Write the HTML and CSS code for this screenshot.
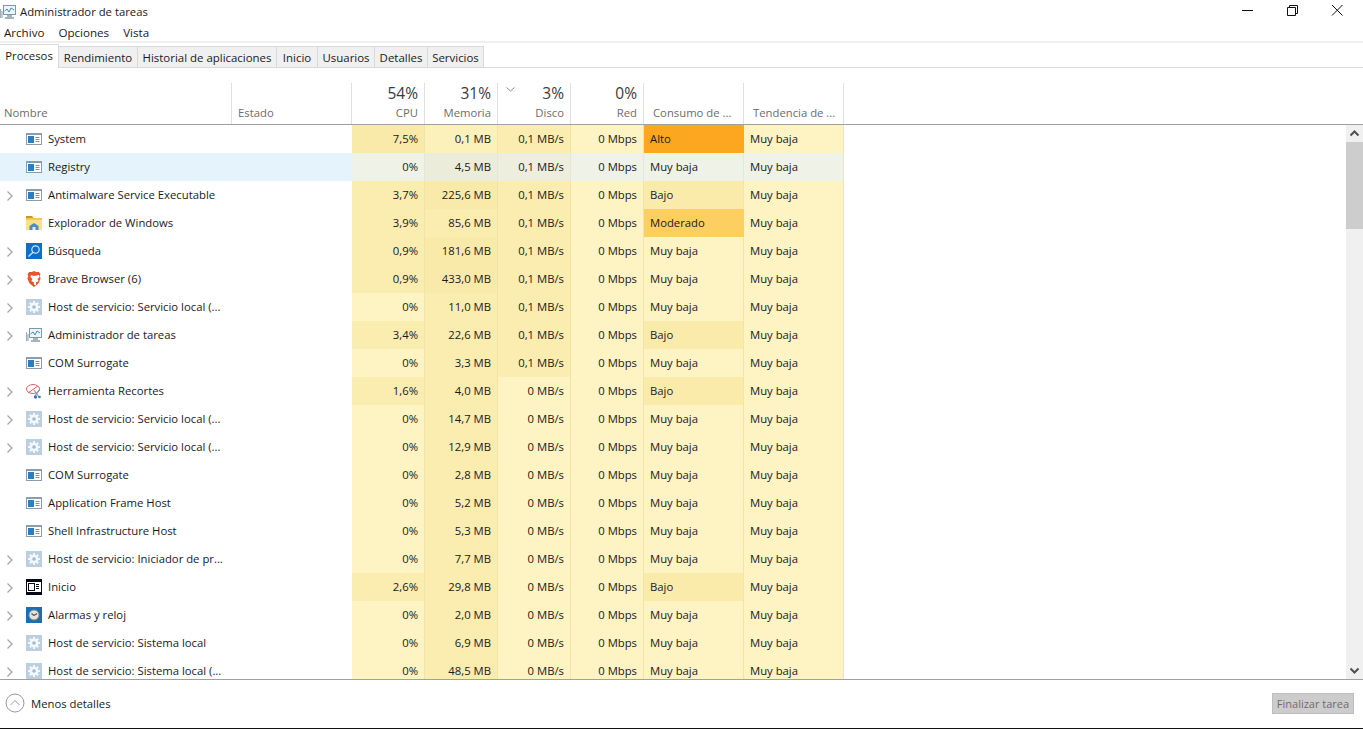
FILE: index.html
```html
<!DOCTYPE html>
<html lang="es">
<head>
<meta charset="utf-8">
<title>Administrador de tareas</title>
<link rel="stylesheet" href="styles.css">
</head>
<body>
<svg class="defs" width="0" height="0">
  <defs>
    <symbol id="i-app" viewBox="0 0 16 16"><rect x="0" y="2" width="16" height="12" fill="#8c9cab"/><rect x="1" y="4" width="14" height="9" fill="#fff"/><rect x="2" y="5" width="6" height="7" fill="#2a7fc4"/><path d="M9.500 6.500h4M9.500 8.500h4M9.500 10.500h4" stroke="#7f8f9e"/></symbol>
    <symbol id="i-folder" viewBox="0 0 16 16"><path d="M0 1h6l2 2h8v12H0z" fill="#f5c94e"/><path d="M0 1h6l1 2H0z" fill="#c9962b"/><path d="M0 5h16v10H0z" fill="#fbdf8a"/><path d="M3.500 15v-4l4.500-3 4.500 3v4z" fill="#4a8ec4"/><path d="M6.500 15v-3h3v3z" fill="#e8eef4"/></symbol>
    <symbol id="i-search" viewBox="0 0 16 16"><rect width="16" height="16" fill="#0f6fc6"/><circle cx="9.500" cy="6.500" r="3.700" fill="none" stroke="#cfe6fa" stroke-width="1.200"/><path d="M7 9.200L2.500 13.500" stroke="#cfe6fa" stroke-width="1.300"/></symbol>
    <symbol id="i-brave" viewBox="0 0 16 16"><path d="M8 0l2.200 1h2.600l1.600 2-.6 2.200.8 2.300-2.200 5L8 16l-4.400-3.500-2.200-5 .8-2.300L1.600 3l1.600-2h2.600z" fill="#e8552b"/><path d="M8 5L5 4l-.6 2 2 2-1 2 2.600 1.500V14h2v-2.500L12.600 10l-1-2 2-2L13 4z" fill="#fff"/></symbol>
    <symbol id="i-gear" viewBox="0 0 16 16"><rect width="16" height="16" fill="#bccfe0"/><circle cx="8" cy="8" r="4.300" fill="#f5f8fb"/><path d="M8 2v12M2 8h12M3.800 3.800l8.400 8.400M12.200 3.800l-8.400 8.400" stroke="#f5f8fb" stroke-width="2"/><circle cx="8" cy="8" r="1.800" fill="#9dbbd5"/></symbol>
    <symbol id="i-taskmgr" viewBox="0 0 16 16"><rect x="3.500" y="1.500" width="12" height="9" fill="#eef4f8" stroke="#7f98a8"/><path d="M4.500 7l2.500-2 2 3 2-4 3 2" fill="none" stroke="#3f8fb5"/><path d="M0.500 5v9M2 7v7" stroke="#9fb0bc" stroke-width="1.200"/><path d="M7 11h5v2h2v2H5v-2h2z" fill="#a7b4bd"/></symbol>
    <symbol id="i-snip" viewBox="0 0 16 16"><ellipse cx="7" cy="6" rx="6.500" ry="4.500" fill="none" stroke="#d9656a"/><path d="M2 10L12 3" stroke="#d9656a"/><path d="M8 7l5 7M14 6L9 13" stroke="#8a9aa8" stroke-width="1.200"/><circle cx="9.500" cy="14" r="1.700" fill="#2f7fc0"/><circle cx="13.500" cy="14" r="1.300" fill="#2f7fc0"/></symbol>
    <symbol id="i-news" viewBox="0 0 16 16"><rect width="16" height="16" fill="#050a14"/><rect x="1" y="3" width="14" height="10" fill="#fff"/><rect x="2" y="4" width="7" height="8" fill="#050a14"/><rect x="3" y="5" width="5" height="6" fill="#fff"/><path d="M10 5.500h3M10 7.500h3M10 9.500h3" stroke="#050a14"/></symbol>
    <symbol id="i-clock" viewBox="0 0 16 16"><rect width="16" height="16" fill="#1b6fb0"/><circle cx="8" cy="8" r="5" fill="#e8e4dc" stroke="#8c8c8c"/><path d="M8 8.500L5.500 6.500M8 8.500l3-2" stroke="#555" stroke-width="1.300"/></symbol>
    <symbol id="i-chev" viewBox="0 0 8 12"><path d="M1.500 1.500L6 6l-4.500 4.500" fill="none" stroke="#a6a6a6" stroke-width="1.300"/></symbol>
  </defs>
</svg>
<div class="window">
  <header class="titlebar">
    <div class="title"><svg class="title-icon"><use href="#i-taskmgr"/></svg><span>Administrador de tareas</span></div>
    <div class="winbtns">
      <svg class="winbtn" viewBox="0 0 45 20"><path d="M17 10.500h11" stroke="#111" fill="none"/></svg>
      <svg class="winbtn" viewBox="0 0 45 20"><path d="M17.500 7.500h8v8h-8zM19.500 7.500v-2h8v8h-2" stroke="#111" fill="none"/></svg>
      <svg class="winbtn" viewBox="0 0 45 20"><path d="M17 5l10.500 10.500M27.500 5L17 15.500" stroke="#111" fill="none"/></svg>
    </div>
  </header>
  <nav class="menu"><span>Archivo</span><span>Opciones</span><span>Vista</span></nav>
  <div class="tabs">
    <span class="tab active">Procesos</span><span class="tab t1">Rendimiento</span><span class="tab t2">Historial de aplicaciones</span><span class="tab t3">Inicio</span><span class="tab t4">Usuarios</span><span class="tab t5">Detalles</span><span class="tab t6">Servicios</span>
  </div>
  <div class="thead">
    <div class="th left first"><span class="lbl">Nombre</span></div>
    <div class="th left"><span class="lbl">Estado</span></div>
    <div class="th num"><span class="pct">54%</span><span class="lbl">CPU</span></div>
    <div class="th num"><span class="pct">31%</span><span class="lbl">Memoria</span></div>
    <div class="th num sorted"><span class="pct">3%</span><span class="lbl">Disco</span><svg class="sort" viewBox="0 0 9 5"><path d="M.5.500l4 3.500 4-3.500" fill="none" stroke="#8a8a8a"/></svg></div>
    <div class="th num"><span class="pct">0%</span><span class="lbl">Red</span></div>
    <div class="th left wide"><span class="lbl">Consumo de ...</span></div>
    <div class="th left wide"><span class="lbl">Tendencia de ...</span></div>
  </div>
  <div class="body">
    <div class="rows" id="rows"></div>
    <div class="scrollbar">
      <svg class="sb-arrow" viewBox="0 0 17 17"><path d="M4.500 10.500l4-4 4 4" fill="none" stroke="#505050" stroke-width="2"/></svg>
      <div class="sb-thumb"></div>
      <div class="sb-track"></div>
      <svg class="sb-arrow" viewBox="0 0 17 17"><path d="M4.500 6.500l4 4 4-4" fill="none" stroke="#505050" stroke-width="2"/></svg>
    </div>
  </div>
  <footer class="footer">
    <div class="less"><svg class="less-icon" viewBox="0 0 20 20"><circle cx="10" cy="10" r="9" fill="none" stroke="#9a9a9a"/><path d="M5.500 12l4.500-4.500 4.500 4.500" fill="none" stroke="#9a9a9a"/></svg><span>Menos detalles</span></div>
    <button class="endtask" type="button">Finalizar tarea</button>
  </footer>
</div>
<script src="app.js"></script>
</body>
</html>
```
FILE: styles.css
```css
* { box-sizing: border-box; }
html, body { margin: 0; height: 100%; background: #fff; overflow: hidden; }
body { font-family: "Open Sans", "Noto Sans", sans-serif; font-size: 11.300px; color: #1a1a1a; }
.defs { position: absolute; }
.window { display: flex; flex-direction: column; height: 729px; border-bottom: 1px solid #111; }
.titlebar { display: flex; justify-content: space-between; height: 22px; flex: none; }
.title { display: flex; align-items: center; gap: 4px; height: 23px; }
.title-icon { width: 16px; height: 16px; }
.winbtns { display: flex; padding-right: 3px; }
.winbtn { width: 45px; height: 20px; }
.menu { display: flex; gap: 14px; height: 21px; padding: 1px 0 0 4px; align-items: center; flex: none; border-bottom: 2px solid #f0f0f0; font-size: 11.600px; }
.tabs { display: flex; height: 25px; flex: none; border-bottom: 1px solid #d9d9d9; align-items: flex-end; font-size: 11.450px; }
.tab { height: 21px; line-height: 21px; text-align: center; background: #f0f0f0; border: 1px solid #d9d9d9; border-left: 0; border-bottom: 0; white-space: nowrap; }
.tab.active { height: 24px; margin-bottom: -1px; background: #fff; line-height: 21px; width: 59px; font-size: 11.300px; }
.t1 { width: 79px; }
.t2 { width: 139px; }
.t3 { width: 41px; }
.t4 { width: 57px; }
.t5 { width: 53px; }
.t6 { width: 56px; }
.thead { display: grid; grid-template-columns: 232px 120px repeat(4, 73px) 100px 100px; height: 57px; flex: none; border-bottom: 1px solid #a0a0a0; padding-top: 15px; }
.th { position: relative; display: flex; flex-direction: column; justify-content: flex-end; border-right: 1px solid #e0e0e0; padding: 0 6px 3px; color: #6d6d6d; }
.th.first { padding-left: 4px; }
.th.num { align-items: flex-end; }
.th.wide { padding-left: 9px; }
.pct { font-size: 15.500px; line-height: 20px; color: #3a3a3a; margin-bottom: 1px; }
.lbl { line-height: 17px; white-space: nowrap; }
.sort { position: absolute; left: 8px; top: 4px; width: 9px; height: 5px; }
.body { display: flex; flex: 1; min-height: 0; }
.rows { flex: 1; overflow: hidden; }
.row { display: grid; grid-template-columns: 232px 120px repeat(4, 73px) 100px 100px; height: 28px; align-items: stretch; }
.name { display: flex; align-items: center; position: relative; padding-left: 26px; gap: 6px; white-space: nowrap; }
.name span { margin-bottom: 1px; }
.chev { position: absolute; left: 6px; top: 9px; width: 8px; height: 12px; }
.icon { width: 16px; height: 16px; flex: none; }
.cell { display: flex; align-items: center; justify-content: flex-end; padding: 0 6px 1px; border-right: 1px solid #f3e4a4; background: #fdf3c3; white-space: nowrap; }
.cell.txt { justify-content: flex-start; padding-left: 6px; }
.row.hover .name, .row.hover .state { background: #e5f3fd; }
.h0 { background: #fdf3c3; }
.h1 { background: #fcf0bb; }
.h2 { background: #fbecb0; }
.h3 { background: #faeaa9; }
.hover .cell { background: #eff2e6; border-right-color: #e6e8d5; }
.hover .cell.mem { background: #ebecd9; }
.hover .cell.disk { background: #edeedd; }
.lvl-alto { background: #fca71f; border-right-color: #fca71f; }
.lvl-mod { background: #fdcf60; border-right-color: #fdcf60; }
.lvl-bajo { background: #faebab; }
.scrollbar { width: 17px; flex: none; display: flex; flex-direction: column; background: #f0f0f0; }
.sb-arrow { width: 17px; height: 17px; flex: none; }
.sb-thumb { height: 87px; background: #cdcdcd; flex: none; }
.sb-track { flex: 1; }
.footer { display: flex; justify-content: space-between; align-items: center; height: 49px; flex: none; border-top: 1px solid #a0a0a0; padding: 0 9px 2px 5px; }
.less { display: flex; align-items: center; gap: 6px; }
.less-icon { width: 20px; height: 20px; }
.endtask { width: 82px; height: 21px; padding: 0; font: inherit; font-size: 11px; background: #cccccc; color: #6d6d6d; border: 1px solid #bdbdbd; }
```
FILE: app.js
```js
const data = [
 ["app","System",0,"7,5%","0,1 MB","0,1 MB/s","Alto","alto","h3","h1","h2"],
 ["app","Registry",0,"0%","4,5 MB","0,1 MB/s","Muy baja","","h0","h1","h2"],
 ["app","Antimalware Service Executable",1,"3,7%","225,6 MB","0,1 MB/s","Bajo","bajo","h2","h3","h2"],
 ["folder","Explorador de Windows",0,"3,9%","85,6 MB","0,1 MB/s","Moderado","mod","h2","h2","h2"],
 ["search","Búsqueda",1,"0,9%","181,6 MB","0,1 MB/s","Muy baja","","h2","h3","h2"],
 ["brave","Brave Browser (6)",1,"0,9%","433,0 MB","0,1 MB/s","Muy baja","","h2","h3","h2"],
 ["gear","Host de servicio: Servicio local (...",1,"0%","11,0 MB","0,1 MB/s","Muy baja","","h0","h2","h2"],
 ["taskmgr","Administrador de tareas",1,"3,4%","22,6 MB","0,1 MB/s","Bajo","bajo","h2","h2","h2"],
 ["app","COM Surrogate",0,"0%","3,3 MB","0,1 MB/s","Muy baja","","h0","h2","h2"],
 ["snip","Herramienta Recortes",1,"1,6%","4,0 MB","0 MB/s","Bajo","bajo","h2","h2","h0"],
 ["gear","Host de servicio: Servicio local (...",1,"0%","14,7 MB","0 MB/s","Muy baja","","h0","h2","h0"],
 ["gear","Host de servicio: Servicio local (...",1,"0%","12,9 MB","0 MB/s","Muy baja","","h0","h2","h0"],
 ["app","COM Surrogate",0,"0%","2,8 MB","0 MB/s","Muy baja","","h0","h2","h0"],
 ["app","Application Frame Host",0,"0%","5,2 MB","0 MB/s","Muy baja","","h0","h2","h0"],
 ["app","Shell Infrastructure Host",0,"0%","5,3 MB","0 MB/s","Muy baja","","h0","h2","h0"],
 ["gear","Host de servicio: Iniciador de pr...",1,"0%","7,7 MB","0 MB/s","Muy baja","","h0","h2","h0"],
 ["news","Inicio",1,"2,6%","29,8 MB","0 MB/s","Bajo","bajo","h2","h2","h0"],
 ["clock","Alarmas y reloj",1,"0%","2,0 MB","0 MB/s","Muy baja","","h0","h2","h0"],
 ["gear","Host de servicio: Sistema local",1,"0%","6,9 MB","0 MB/s","Muy baja","","h0","h2","h0"],
 ["gear","Host de servicio: Sistema local (...",1,"0%","48,5 MB","0 MB/s","Muy baja","","h0","h2","h0"]
];
const root = document.getElementById("rows");
data.forEach((d, i) => {
  const [icon, name, exp, cpu, mem, disk, power, lvl, hc, hm, hd] = d;
  const row = document.createElement("div");
  row.className = "row" + (i === 1 ? " hover" : "");
  const chev = exp ? '<svg class="chev"><use href="#i-chev"/></svg>' : "";
  const lv = lvl ? " lvl-" + lvl : "";
  row.innerHTML =
    `<div class="name">${chev}<svg class="icon"><use href="#i-${icon}"/></svg><span>${name}</span></div>` +
    `<div class="state"></div>` +
    `<div class="cell ${hc}">${cpu}</div>` +
    `<div class="cell mem ${hm}">${mem}</div>` +
    `<div class="cell disk ${hd}">${disk}</div>` +
    `<div class="cell">0 Mbps</div>` +
    `<div class="cell txt${lv}">${power}</div>` +
    `<div class="cell txt">Muy baja</div>`;
  root.appendChild(row);
});
```
